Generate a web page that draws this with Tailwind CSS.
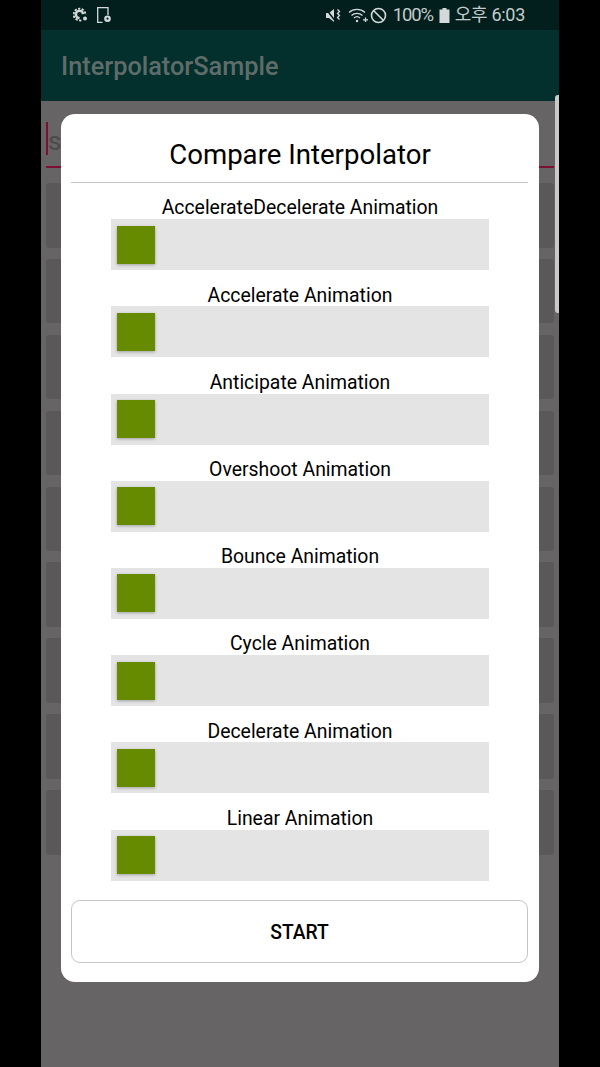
<!DOCTYPE html>
<html>
<head>
<meta charset="utf-8">
<script src="https://cdn.jsdelivr.net/npm/@tailwindcss/browser@4"></script>
</head>
<body class="bg-black font-['Roboto',sans-serif]">
<div class="w-[600px] h-[1067px] bg-black flex justify-center overflow-hidden">
  <div class="relative w-[518px] h-full bg-[#666465] flex flex-col">
    <!-- status bar -->
    <div class="h-[30px] bg-[#021f1d] flex items-center justify-between pl-[32px] pr-[34px] text-[#c4cbca]">
      <div class="flex items-center gap-[9px]">
        <svg width="15" height="16" viewBox="0 0 15 16" fill="none">
          <circle cx="6.500" cy="7.500" r="5.800" stroke="#d4dad9" stroke-width="2" stroke-dasharray="2.200 1.400"/>
          <circle cx="6.500" cy="7.500" r="3.600" stroke="#d4dad9" stroke-width="2.400"/>
          <circle cx="11" cy="11.500" r="4.500" fill="#021f1d"/>
          <circle cx="12" cy="11.500" r="2" fill="#d4dad9"/>
          <circle cx="7.500" cy="13.500" r="1" fill="#d4dad9"/>
        </svg>
        <svg width="15" height="16" viewBox="0 0 15 16" fill="none" stroke="#d4dad9" stroke-width="1.300"><path d="M5.500 15.300H.7V.7h10.300v7.300"/><circle cx="10.500" cy="11.700" r="3.300" fill="#d4dad9" stroke="none"/><circle cx="10.500" cy="11.700" r="1.100" fill="#021f1d" stroke="none"/></svg>
      </div>
      <div class="flex items-center text-[18.500px] leading-none font-['Roboto','Noto_Sans_CJK_KR',sans-serif] tracking-[-1.200px]">
        <svg width="17" height="15" viewBox="0 0 17 15" fill="#d4dad9" class="mr-[6px]"><path d="M1 5h3l5-4v13L4 10H1z"/><path d="M1 1l10 13" stroke="#021f1d" stroke-width="1.500"/><path d="M12.500 1.500l2 2-2 2 2 2-2 2 2 2" fill="none" stroke="#d4dad9" stroke-width="1.300"/></svg>
        <svg width="21" height="16" viewBox="0 0 21 16" fill="none" stroke="#d4dad9" stroke-width="1.300" class="mr-[1px]"><path d="M1 5.500a12 12 0 0 1 16 0M3.500 8.500a8 8 0 0 1 11 0M6 11a4.500 4.500 0 0 1 6 0"/><circle cx="9" cy="14" r="1.200" fill="#d4dad9" stroke="none"/><path d="M17.500 10.500v4.500M15 12.800h5"/></svg>
        <svg width="17" height="17" viewBox="0 0 17 17" fill="none" stroke="#d4dad9" stroke-width="1.600" class="mr-[6px]"><circle cx="8.500" cy="8.500" r="7"/><path d="M3.500 3.500l10 10"/></svg>
        <span>100%</span>
        <svg width="11" height="15" viewBox="0 0 11 15" fill="#d4dad9" class="ml-[6px] mr-[5px]"><path d="M3.500 0h4v1.500H10.500V15H.5V1.500h3z"/></svg>
        <span class="text-[18px] tracking-[-0.3px]">오후 6:03</span>
      </div>
    </div>
    <!-- app bar -->
    <div class="h-[71px] bg-[#03302c] flex items-center pl-[20px] pt-[3px]">
      <span class="text-[25.300px] font-medium text-[#5f6c6a] leading-none">InterpolatorSample</span>
    </div>
    <!-- page behind the dialog -->
    <div class="flex-1 flex flex-col bg-[#666465]">
      <div class="relative h-[66px] mx-[5px] shrink-0">
        <div class="absolute left-0 top-[21px] w-[2px] h-[33px] bg-[#7d1030]"></div>
        <span class="absolute left-[2px] top-[27px] text-[26px] leading-none text-[#4a4a4a]">s</span>
        <div class="absolute left-0 right-0 top-[65px] h-[2px] bg-[#7d1030]"></div>
      </div>
      <div class="flex flex-col gap-[11.400px] mx-[5px] mt-[16px]">
        <div class="h-[64.500px] rounded-[3px] bg-[#5a5859]"></div>
        <div class="h-[64.500px] rounded-[3px] bg-[#5a5859]"></div>
        <div class="h-[64.500px] rounded-[3px] bg-[#5a5859]"></div>
        <div class="h-[64.500px] rounded-[3px] bg-[#5a5859]"></div>
        <div class="h-[64.500px] rounded-[3px] bg-[#5a5859]"></div>
        <div class="h-[64.500px] rounded-[3px] bg-[#5a5859]"></div>
        <div class="h-[64.500px] rounded-[3px] bg-[#5a5859]"></div>
        <div class="h-[64.500px] rounded-[3px] bg-[#5a5859]"></div>
        <div class="h-[64.500px] rounded-[3px] bg-[#5a5859]"></div>
      </div>
    </div>
    <!-- scrollbar -->
    <div class="absolute right-0 top-[95px] w-[4px] h-[218px] bg-[#c9c9c9] rounded-l-[3px]"></div>
    <!-- dialog -->
    <div class="absolute left-[20px] top-[114px] w-[478px] h-[868px] bg-white rounded-[14px] flex flex-col px-[10px] pt-[21px]">
      <div class="h-[40px] flex items-center justify-center text-[27.600px] leading-none text-black">Compare Interpolator</div>
      <div class="h-[1px] bg-[#c4c4c4] mt-[7px] mr-[1px] shrink-0"></div>
      <div class="flex flex-col items-center mt-[13.200px]">
        <div class="h-[87.200px] w-[378px] flex flex-col shrink-0">
          <div class="h-[23px] flex items-center justify-center pt-[1px] text-[19.400px] leading-none text-black">AccelerateDecelerate Animation</div>
          <div class="h-[51px] bg-[#e4e4e5] flex items-center pl-[6px]"><div class="w-[38px] h-[38px] bg-[#668b00] shadow-[0_1px_3px_rgba(0,0,0,0.3)]"></div></div>
        </div>
        <div class="h-[87.200px] w-[378px] flex flex-col shrink-0">
          <div class="h-[23px] flex items-center justify-center pt-[1px] text-[19.400px] leading-none text-black">Accelerate Animation</div>
          <div class="h-[51px] bg-[#e4e4e5] flex items-center pl-[6px]"><div class="w-[38px] h-[38px] bg-[#668b00] shadow-[0_1px_3px_rgba(0,0,0,0.3)]"></div></div>
        </div>
        <div class="h-[87.200px] w-[378px] flex flex-col shrink-0">
          <div class="h-[23px] flex items-center justify-center pt-[1px] text-[19.400px] leading-none text-black">Anticipate Animation</div>
          <div class="h-[51px] bg-[#e4e4e5] flex items-center pl-[6px]"><div class="w-[38px] h-[38px] bg-[#668b00] shadow-[0_1px_3px_rgba(0,0,0,0.3)]"></div></div>
        </div>
        <div class="h-[87.200px] w-[378px] flex flex-col shrink-0">
          <div class="h-[23px] flex items-center justify-center pt-[1px] text-[19.400px] leading-none text-black">Overshoot Animation</div>
          <div class="h-[51px] bg-[#e4e4e5] flex items-center pl-[6px]"><div class="w-[38px] h-[38px] bg-[#668b00] shadow-[0_1px_3px_rgba(0,0,0,0.3)]"></div></div>
        </div>
        <div class="h-[87.200px] w-[378px] flex flex-col shrink-0">
          <div class="h-[23px] flex items-center justify-center pt-[1px] text-[19.400px] leading-none text-black">Bounce Animation</div>
          <div class="h-[51px] bg-[#e4e4e5] flex items-center pl-[6px]"><div class="w-[38px] h-[38px] bg-[#668b00] shadow-[0_1px_3px_rgba(0,0,0,0.3)]"></div></div>
        </div>
        <div class="h-[87.200px] w-[378px] flex flex-col shrink-0">
          <div class="h-[23px] flex items-center justify-center pt-[1px] text-[19.400px] leading-none text-black">Cycle Animation</div>
          <div class="h-[51px] bg-[#e4e4e5] flex items-center pl-[6px]"><div class="w-[38px] h-[38px] bg-[#668b00] shadow-[0_1px_3px_rgba(0,0,0,0.3)]"></div></div>
        </div>
        <div class="h-[87.200px] w-[378px] flex flex-col shrink-0">
          <div class="h-[23px] flex items-center justify-center pt-[1px] text-[19.400px] leading-none text-black">Decelerate Animation</div>
          <div class="h-[51px] bg-[#e4e4e5] flex items-center pl-[6px]"><div class="w-[38px] h-[38px] bg-[#668b00] shadow-[0_1px_3px_rgba(0,0,0,0.3)]"></div></div>
        </div>
        <div class="h-[87.200px] w-[378px] flex flex-col shrink-0">
          <div class="h-[23px] flex items-center justify-center pt-[1px] text-[19.400px] leading-none text-black">Linear Animation</div>
          <div class="h-[51px] bg-[#e4e4e5] flex items-center pl-[6px]"><div class="w-[38px] h-[38px] bg-[#668b00] shadow-[0_1px_3px_rgba(0,0,0,0.3)]"></div></div>
        </div>
      </div>
      <div class="mt-[6.800px] mr-[1px] h-[63px] shrink-0 rounded-[9px] border border-[#c6c6c6] flex items-center justify-center pt-[2px] text-[19.300px] font-medium text-black leading-none">START</div>
    </div>
  </div>
</div>
</body>
</html>
